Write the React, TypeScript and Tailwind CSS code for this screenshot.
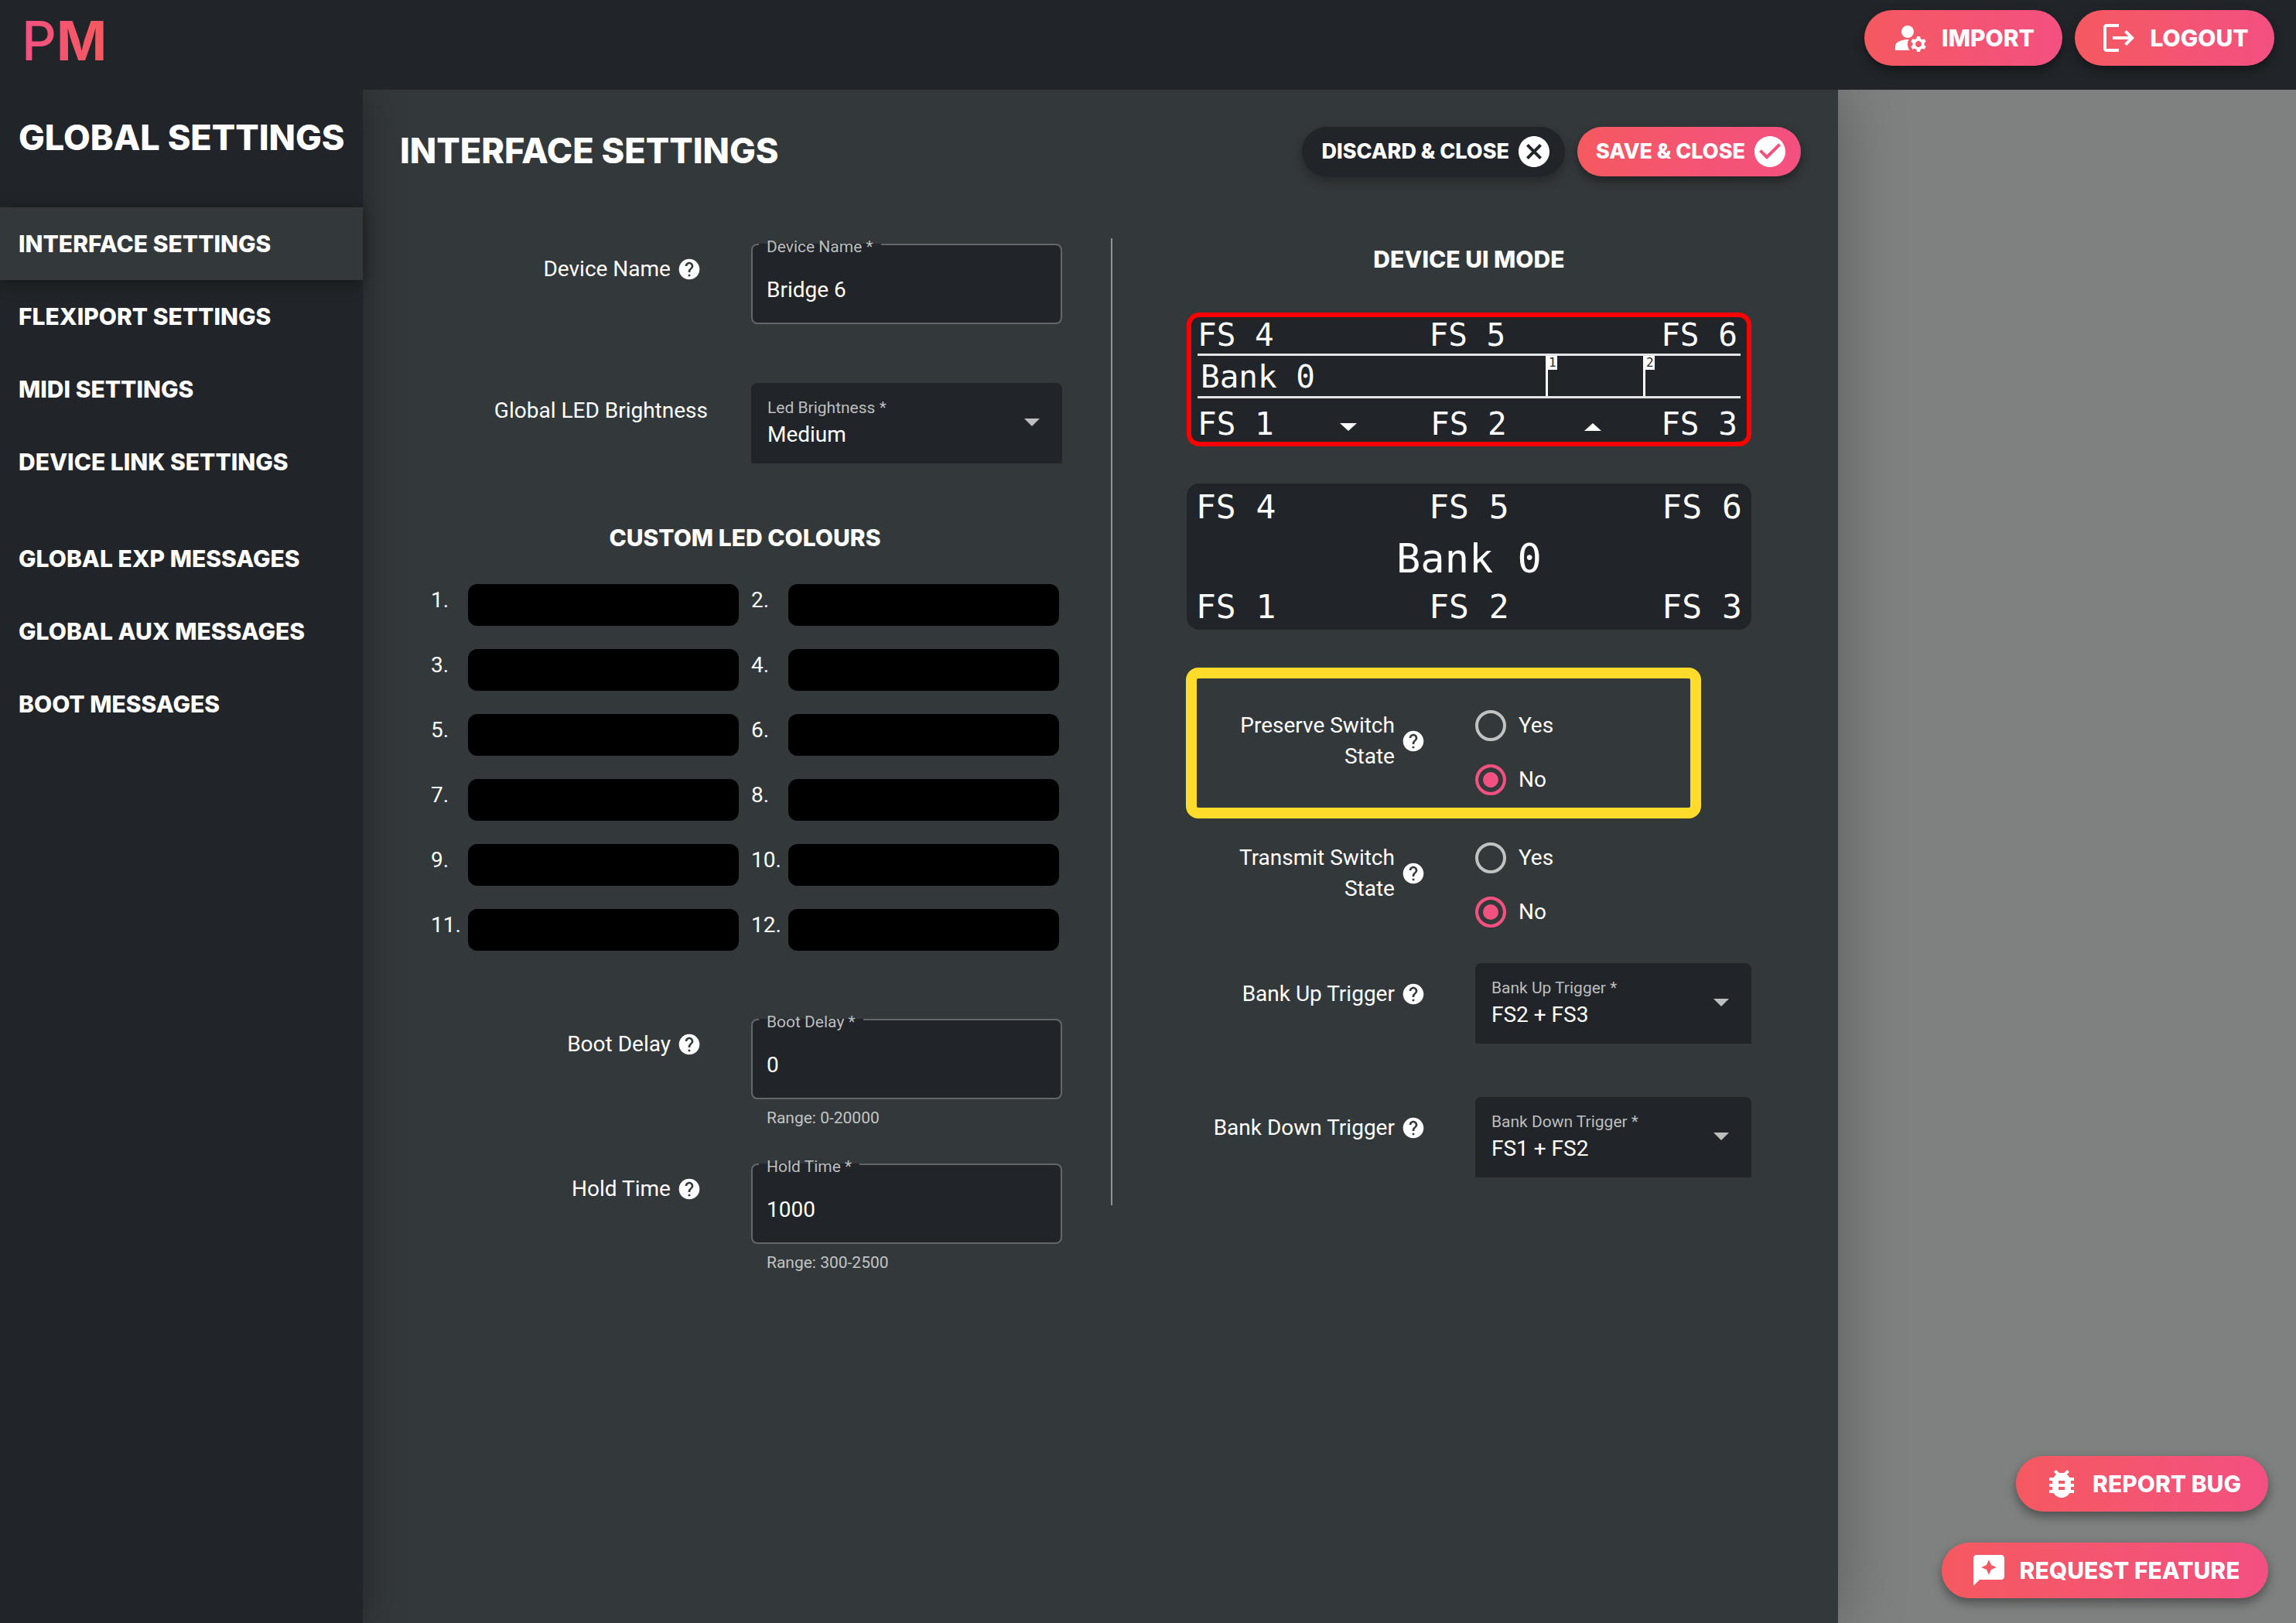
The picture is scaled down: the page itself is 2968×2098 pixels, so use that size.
import type { ReactNode } from "react";
import {
  MdBugReport,
  MdCancel,
  MdCheckCircle,
  MdHelp,
  MdLogout,
  MdManageAccounts,
} from "react-icons/md";

const PINK_BUTTON =
  "flex items-center rounded-full bg-linear-to-r from-[#f5595f] to-[#f35081] font-[Inter,sans-serif] font-extrabold text-white shadow-[0_6px_14px_rgba(0,0,0,0.4)]";

function FeatureIcon() {
  return (
    <svg viewBox="0 0 24 24" className="size-12 shrink-0 fill-current" aria-hidden="true">
      <path
        fillRule="evenodd"
        d="M20 2H4c-1.1 0-1.99.9-1.99 2L2 22l4-4h14c1.1 0 2-.9 2-2V4c0-1.1-.9-2-2-2zM12 5.1l1.5 3.4 3.4 1.5-3.4 1.5L12 14.9l-1.5-3.4L7.1 10l3.4-1.5z"
      />
    </svg>
  );
}

function Help() {
  return <MdHelp className="size-8 shrink-0" aria-hidden="true" />;
}

function OutlinedField({ id, label, value, hint }: { id: string; label: string; value: string; hint?: string }) {
  return (
    <div>
      <div className="relative h-[104px]">
        <input
          id={id}
          defaultValue={value}
          className="h-full w-full rounded-lg border-2 border-[#62676a] bg-[#212529] pt-[14px] pl-[18px] text-[28px] text-white"
        />
        <label
          htmlFor={id}
          className="absolute -top-2 left-[10px] bg-[linear-gradient(to_bottom,transparent_8px,#212529_8px)] px-[10px] text-[21px] leading-6 text-[#bcbebf]"
        >
          {label} *
        </label>
      </div>
      {hint && <p className="mt-[10px] pl-5 text-[21px] leading-7 text-[#c2c4c4]">{hint}</p>}
    </div>
  );
}

function FilledSelect({ id, label, options }: { id: string; label: string; options: string[] }) {
  return (
    <div className="relative h-[104px]">
      <select
        id={id}
        className="h-full w-full appearance-none rounded-t-lg bg-[#212529] pt-[30px] pr-14 pl-[21px] text-[28px] text-white"
      >
        {options.map((o) => (
          <option key={o}>{o}</option>
        ))}
      </select>
      <label htmlFor={id} className="absolute top-5 left-[21px] text-[21px] leading-6 text-[#bcbebf]">
        {label} *
      </label>
      <svg
        viewBox="0 0 20 10"
        className="pointer-events-none absolute top-[46px] right-[29px] h-[10px] w-5 fill-[#bcbebf]"
        aria-hidden="true"
      >
        <path d="M0 0h20L10 10z" />
      </svg>
    </div>
  );
}

function LeftRow({ children, label, pad = "pt-[13px] pr-12", help = true }: { children: ReactNode; label: string; pad?: string; help?: boolean }) {
  return (
    <div className="grid grid-cols-[398fr_402fr] gap-4">
      <div className={`flex items-start justify-end gap-2 text-[28px] leading-10 ${pad}`}>
        <span>{label}</span>
        {help && (
          <span className="flex h-10 items-center">
            <Help />
          </span>
        )}
      </div>
      {children}
    </div>
  );
}

const RIGHT_ROW = "grid grid-cols-[309fr_357fr] gap-16";

function YesNo({ name, label }: { name: string; label: string }) {
  return (
    <fieldset className={RIGHT_ROW}>
      <div className="flex items-center justify-end gap-2 self-start text-right text-[28px] leading-10">
        <span className="w-52">{label}</span>
        <Help />
      </div>
      <div className="flex flex-col gap-[30px]">
        {["Yes", "No"].map((o) => (
          <label key={o} className="flex h-10 items-center gap-4 text-[28px]">
            <input
              type="radio"
              name={name}
              defaultChecked={o === "No"}
              className="size-10 appearance-none rounded-full border-4 border-[#c1c3c3] checked:border-[#f35180] checked:bg-[#f35180] checked:shadow-[inset_0_0_0_6px_#33383a]"
            />
            {o}
          </label>
        ))}
      </div>
    </fieldset>
  );
}

function BankTrigger({ id, label, options }: { id: string; label: string; options: string[] }) {
  return (
    <div className={RIGHT_ROW}>
      <div className="flex items-center justify-end gap-2 self-start pt-5 text-[28px] leading-10">
        <span className="whitespace-nowrap">{label}</span>
        <Help />
      </div>
      <FilledSelect id={id} label={label} options={options} />
    </div>
  );
}

function DetailedScreen() {
  return (
    <button
      type="button"
      aria-pressed="true"
      className="mt-[49px] flex h-[173px] w-full flex-col rounded-2xl border-[6px] border-[#ff0000] bg-[#212529] px-2 font-['DejaVu_Sans_Mono',monospace] text-[41px] leading-[46px]"
    >
      <span className="flex h-12 w-full justify-between pr-1">
        <span>FS 4</span>
        <span>FS 5</span>
        <span>FS 6</span>
      </span>
      <span className="flex h-[60px] w-full border-y-[3px] border-[#e4e5e6]">
        <span className="flex flex-1 items-center pt-0.5 pl-1">Bank 0</span>
        {["1", "2"].map((n) => (
          <span key={n} className="flex w-[126px] items-start border-l-3 border-white">
            <span className="w-3 bg-white text-center text-base leading-[18px] text-[#212529]">{n}</span>
          </span>
        ))}
      </span>
      <span className="flex w-full items-center pt-[10px] pr-1">
        <span>FS 1</span>
        <span className="flex-[87]" />
        <svg viewBox="0 0 22 10" className="mt-2 h-[10px] w-[22px] fill-white" aria-hidden="true">
          <path d="M0 0h22L11 10z" />
        </svg>
        <span className="flex-[97]" />
        <span>FS 2</span>
        <span className="flex-[102]" />
        <svg viewBox="0 0 22 10" className="mt-2 h-[10px] w-[22px] fill-white" aria-hidden="true">
          <path d="M0 10h22L11 0z" />
        </svg>
        <span className="flex-[79]" />
        <span>FS 3</span>
      </span>
    </button>
  );
}

function SimpleScreen() {
  return (
    <button
      type="button"
      aria-pressed="false"
      className="mt-12 flex h-[189px] w-full flex-col justify-between rounded-2xl bg-[#212529] px-3 font-['DejaVu_Sans_Mono',monospace] text-[43px] leading-[60px]"
    >
      <span className="flex w-full justify-between">
        <span>FS 4</span>
        <span>FS 5</span>
        <span>FS 6</span>
      </span>
      <span className="w-full pt-1 text-center text-[52px]">Bank 0</span>
      <span className="flex w-full justify-between">
        <span>FS 1</span>
        <span>FS 2</span>
        <span>FS 3</span>
      </span>
    </button>
  );
}

const NAV_GROUPS = [
  ["INTERFACE SETTINGS", "FLEXIPORT SETTINGS", "MIDI SETTINGS", "DEVICE LINK SETTINGS"],
  ["GLOBAL EXP MESSAGES", "GLOBAL AUX MESSAGES", "BOOT MESSAGES"],
];

export default function App() {
  return (
    <div className="flex min-h-screen flex-col bg-[#7f8080] font-[Roboto,sans-serif] text-white">
      <header className="relative z-30 flex h-[116px] items-start justify-between bg-[#212529] pr-7 pl-7">
        <a
          href="#home"
          aria-label="PM home"
          className="mt-[9px] bg-linear-to-r from-[#f35081] to-[#f5595c] bg-clip-text font-[Inter,sans-serif] text-[70px] leading-[88px] text-transparent"
        >
          <span className="font-medium">P</span>
          <span className="font-bold">M</span>
        </a>
        <div className="flex gap-4 pt-[13px]">
          <button type="button" className={`${PINK_BUTTON} h-[72px] w-[256px] justify-center gap-4 text-3xl`}>
            <MdManageAccounts className="size-12" aria-hidden="true" />
            IMPORT
          </button>
          <button type="button" className={`${PINK_BUTTON} h-[72px] w-[258px] justify-center gap-4 text-3xl`}>
            <MdLogout className="size-12" aria-hidden="true" />
            LOGOUT
          </button>
        </div>
      </header>

      <div className="flex flex-1">
        <aside className="relative z-20 w-[469px] shrink-0 bg-[#212529] font-[Inter,sans-serif] font-extrabold shadow-[0_0_50px_rgba(0,0,0,0.35)]">
          <h1 className="h-[152px] pt-[42px] pl-6 text-[45px] leading-10 whitespace-nowrap">GLOBAL SETTINGS</h1>
          <nav className="flex flex-col gap-[31px]">
            {NAV_GROUPS.map((group) => (
              <ul key={group[0]}>
                {group.map((item) => (
                  <li key={item}>
                    <a
                      href="#settings"
                      className={
                        item === "INTERFACE SETTINGS"
                          ? "flex h-[94px] items-center bg-[#33383a] pl-6 text-3xl shadow-[0_4px_20px_rgba(0,0,0,0.4)]"
                          : "flex h-[94px] items-center pl-6 text-3xl"
                      }
                    >
                      {item}
                    </a>
                  </li>
                ))}
              </ul>
            ))}
          </nav>
        </aside>

        <main className="relative z-10 w-[64.25%] shrink-0 bg-[#33383a] px-12 pt-12 shadow-[0_0_80px_rgba(0,0,0,0.3)]">
          <div className="flex h-16 items-center gap-4">
            <h2 className="flex-1 pb-0.5 font-[Inter,sans-serif] text-[45px] font-extrabold">INTERFACE SETTINGS</h2>
            <button
              type="button"
              className="flex h-16 w-[340px] items-center justify-end gap-2 rounded-full bg-[#212529] pr-4 font-[Inter,sans-serif] text-[27px] font-extrabold shadow-[0_6px_14px_rgba(0,0,0,0.3)]"
            >
              DISCARD &amp; CLOSE
              <MdCancel className="size-12" aria-hidden="true" />
            </button>
            <button type="button" className={`${PINK_BUTTON} h-16 w-[289px] justify-end gap-2 pr-4 text-[27px]`}>
              SAVE &amp; CLOSE
              <MdCheckCircle className="size-12" aria-hidden="true" />
            </button>
          </div>

          <div className="mt-20 grid grid-cols-[919fr_892fr] items-start">
            <section className="pt-[7px] pr-[63px] pl-10">
              <LeftRow label="Device Name">
                <OutlinedField id="device-name" label="Device Name" value="Bridge 6" />
              </LeftRow>
              <div className="mt-[76px]">
                <LeftRow label="Global LED Brightness" pad="pt-4 pr-10" help={false}>
                  <FilledSelect id="led-brightness" label="Led Brightness" options={["Medium", "Low", "High"]} />
                </LeftRow>
              </div>

              <h3 className="mt-[76px] pr-1 text-center font-[Inter,sans-serif] text-3xl leading-10 font-extrabold">
                CUSTOM LED COLOURS
              </h3>
              <ol className="mt-10 grid grid-cols-2 gap-x-4 gap-y-[30px] pr-1">
                {Array.from({ length: 12 }, (_, i) => (
                  <li key={i} className="flex">
                    <span className="w-12 shrink-0 text-[28px] leading-[42px]">{i + 1}.</span>
                    <button
                      type="button"
                      aria-label={`LED colour ${i + 1}`}
                      className="h-[54px] flex-1 rounded-xl bg-black"
                    />
                  </li>
                ))}
              </ol>

              <div className="mt-[88px]">
                <LeftRow label="Boot Delay">
                  <OutlinedField id="boot-delay" label="Boot Delay" value="0" hint="Range: 0-20000" />
                </LeftRow>
              </div>
              <div className="mt-[45px]">
                <LeftRow label="Hold Time">
                  <OutlinedField id="hold-time" label="Hold Time" value="1000" hint="Range: 300-2500" />
                </LeftRow>
              </div>
            </section>

            <section className="border-l-2 border-[#8e9496] pt-[7px] pr-16 pb-9 pl-24">
              <h3 className="text-center font-[Inter,sans-serif] text-3xl leading-10 font-extrabold">
                DEVICE UI MODE
              </h3>
              <DetailedScreen />
              <SimpleScreen />
              <div className="relative mt-[104px]">
                <YesNo name="preserve" label="Preserve Switch State" />
                <div className="pointer-events-none absolute -top-[55px] right-[65px] -bottom-[30px] -left-px rounded-2xl border-[14px] border-[#ffdc2b]" />
              </div>
              <div className="mt-[61px]">
                <YesNo name="transmit" label="Transmit Switch State" />
              </div>
              <div className="mt-[46px]">
                <BankTrigger id="bank-up" label="Bank Up Trigger" options={["FS2 + FS3", "FS1 + FS2"]} />
              </div>
              <div className="mt-[69px]">
                <BankTrigger id="bank-down" label="Bank Down Trigger" options={["FS1 + FS2", "FS2 + FS3"]} />
              </div>
            </section>
          </div>
        </main>
      </div>

      <div className="fixed right-9 bottom-8 z-40 flex flex-col items-end gap-10">
        <button type="button" className={`${PINK_BUTTON} h-[72px] w-[326px] justify-center gap-4 text-3xl`}>
          <MdBugReport className="size-12" aria-hidden="true" />
          REPORT BUG
        </button>
        <button type="button" className={`${PINK_BUTTON} h-[72px] w-[422px] justify-center gap-4 text-3xl`}>
          <FeatureIcon />
          REQUEST FEATURE
        </button>
      </div>
    </div>
  );
}
